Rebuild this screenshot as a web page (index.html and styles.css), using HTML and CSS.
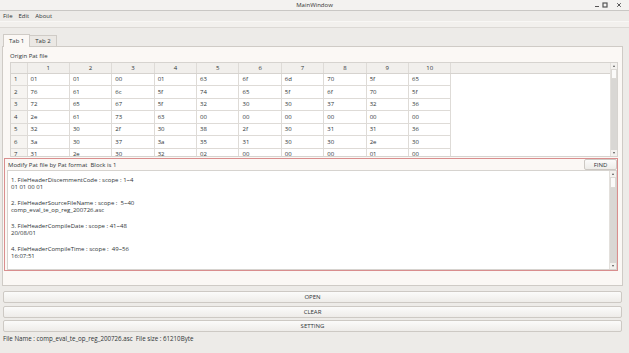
FILE: index.html
```html
<!DOCTYPE html>
<html>
<head>
<meta charset="utf-8">
<title>MainWindow</title>
<link rel="stylesheet" href="styles.css">
</head>
<body>
<div class="window">
  <div class="titlebar">
    <span></span>
    <span class="title">MainWindow</span>
    <span class="controls">
      <svg width="6" height="6" viewBox="0 0 6 6"><rect x="1" y="4" width="4" height="1" fill="#555"/></svg>
      <svg width="6" height="6" viewBox="0 0 6 6"><rect x="1" y="1" width="4" height="4" fill="none" stroke="#555" stroke-width="1.2"/></svg>
      <svg width="6" height="6" viewBox="0 0 6 6"><path d="M1.2 1.2 L4.8 4.8 M4.8 1.2 L1.2 4.8" stroke="#555" stroke-width="1"/></svg>
    </span>
  </div>
  <div class="menubar">
    <span>File</span><span>Edit</span><span>About</span>
  </div>
  <div class="toolbar"></div>
  <div class="tabbar">
    <div class="tab active">Tab 1</div>
    <div class="tab">Tab 2</div>
  </div>
  <div class="pane">
    <div class="label">Origin Pat file</div>
    <div class="tablebox">
      <div class="tablearea">
        <table class="grid">
          <thead>
            <tr><th class="corner"></th><th>1</th><th>2</th><th>3</th><th>4</th><th>5</th><th>6</th><th>7</th><th>8</th><th>9</th><th>10</th><th class="filler"></th></tr>
          </thead>
          <tbody>
            <tr><th>1</th><td>01</td><td>01</td><td>00</td><td>01</td><td>63</td><td>6f</td><td>6d</td><td>70</td><td>5f</td><td>65</td><td class="filler"></td></tr>
            <tr><th>2</th><td>76</td><td>61</td><td>6c</td><td>5f</td><td>74</td><td>65</td><td>5f</td><td>6f</td><td>70</td><td>5f</td><td class="filler"></td></tr>
            <tr><th>3</th><td>72</td><td>65</td><td>67</td><td>5f</td><td>32</td><td>30</td><td>30</td><td>37</td><td>32</td><td>36</td><td class="filler"></td></tr>
            <tr><th>4</th><td>2e</td><td>61</td><td>73</td><td>63</td><td>00</td><td>00</td><td>00</td><td>00</td><td>00</td><td>00</td><td class="filler"></td></tr>
            <tr><th>5</th><td>32</td><td>30</td><td>2f</td><td>30</td><td>38</td><td>2f</td><td>30</td><td>31</td><td>31</td><td>36</td><td class="filler"></td></tr>
            <tr><th>6</th><td>3a</td><td>30</td><td>37</td><td>3a</td><td>35</td><td>31</td><td>30</td><td>30</td><td>2e</td><td>30</td><td class="filler"></td></tr>
            <tr><th>7</th><td>31</td><td>2e</td><td>30</td><td>32</td><td>02</td><td>00</td><td>00</td><td>00</td><td>01</td><td>00</td><td class="filler"></td></tr>
          </tbody>
        </table>
      </div>
      <div class="vscroll">
        <div class="arrow up"></div>
        <div class="handle short"></div>
        <div class="trough"></div>
        <div class="arrow down"></div>
      </div>
    </div>
    <div class="group">
      <div class="grouphead">
        <span class="grouplabel">Modify Pat file by Pat format&nbsp; Block is 1</span>
        <button class="btn find">FIND</button>
      </div>
      <div class="editbox">
        <div class="edittext">
          <p>1. FileHeaderDiscemmentCode : scope : 1~4<br>01 01 00 01</p>
          <p>2. FileHeaderSourceFileName : scope :&nbsp; 5~40<br>comp_eval_te_op_reg_200726.asc</p>
          <p>3. FileHeaderCompileDate : scope : 41~48<br>20/08/01</p>
          <p>4. FileHeaderCompileTime : scope :&nbsp; 49~56<br>16:07:51</p>
        </div>
        <div class="vscroll">
          <div class="arrow up"></div>
          <div class="handle"></div>
          <div class="trough"></div>
          <div class="arrow down"></div>
        </div>
      </div>
    </div>
  </div>
  <div class="buttons">
    <button class="btn wide">OPEN</button>
    <button class="btn wide">CLEAR</button>
    <button class="btn wide">SETTING</button>
  </div>
  <div class="status">File Name : comp_eval_te_op_reg_200726.asc&nbsp; File size : 61210Byte</div>
</div>
</body>
</html>
```

FILE: styles.css
```css
* { box-sizing: border-box; }
html, body {
  margin: 0;
  padding: 0;
}
body {
  width: 629px;
  height: 353px;
  overflow: hidden;
  background: #edebe8;
  font-family: "Open Sans", "DejaVu Sans", sans-serif;
  font-size: 6px;
  color: #2e3436;
}
.window {
  display: flex;
  flex-direction: column;
  height: 353px;
}
.titlebar {
  height: 11px;
  display: grid;
  grid-template-columns: 1fr auto 1fr;
  align-items: center;
  background: #f3f2f0;
  border-bottom: 1px solid #c9c7c4;
}
.title { font-size: 6px; color: #333; }
.controls {
  display: flex;
  justify-content: flex-end;
  gap: 2px;
  padding-right: 7px;
}
.controls svg { display: block; }
.controls svg:last-child { margin-left: 6px; }
.menubar {
  height: 10px;
  display: flex;
  align-items: center;
  gap: 6px;
  padding-left: 3px;
  background: #edebe8;
}
.toolbar {
  height: 7px;
  background: #f2f0ed;
  border-top: 1px solid #f8f7f5;
  border-bottom: 1px solid #dcd9d5;
}
.tabbar {
  display: flex;
  align-items: flex-end;
  height: 18px;
  padding-left: 3px;
}
.tab {
  height: 11px;
  padding: 0 5px;
  display: flex;
  align-items: center;
  border: 1px solid #cfcbc6;
  border-bottom: none;
  background: #ebe8e4;
  margin-bottom: 0;
}
.tab.active {
  height: 13px;
  background: #fbf8f5;
  margin-bottom: -1px;
  position: relative;
  z-index: 1;
}
.tab + .tab { border-left: none; }
.pane {
  margin: 0 6px 0 2px;
  height: 240px;
  background: #fbf8f5;
  border: 1px solid #cfcbc6;
  padding: 0 4px 0 1px;
  display: flex;
  flex-direction: column;
}
.label {
  height: 15px;
  display: flex;
  align-items: center;
  padding-left: 6px;
  padding-top: 2px;
}
.tablebox {
  margin-left: 6px;
  height: 95px;
  display: flex;
  border: 1px solid #d6d3cf;
  background: #fff;
  overflow: hidden;
}
.tablearea {
  flex: 1;
  overflow: hidden;
}
.grid {
  border-collapse: collapse;
  table-layout: fixed;
  width: 100%;
  font-size: 6px;
}
.grid th, .grid td {
  padding: 0 0 0 3px;
  height: 12.5px;
  border-right: 1px solid #dedbd7;
  border-bottom: 1px solid #dedbd7;
  white-space: nowrap;
  font-weight: normal;
  text-align: left;
}
.grid thead th {
  height: 10px;
  text-align: center;
  padding: 0;
  background: #f1efec;
  border-bottom: 1px solid #d6d3cf;
  width: 42.4px;
}
.grid thead th.corner { width: 16px; }
.grid thead th.filler { width: auto; border-right: none; }
.grid tbody th {
  background: #f6f4f1;
}
.grid td.filler { border: none; }
.vscroll {
  width: 7px;
  display: flex;
  flex-direction: column;
  background: #f1efec;
  border-left: 1px solid #e3e0dc;
}
.vscroll .arrow {
  height: 6px;
  position: relative;
  background: #f3f1ee;
}
.vscroll .arrow::after {
  content: "";
  position: absolute;
  left: 1.5px;
  top: 2px;
  border-left: 1.5px solid transparent;
  border-right: 1.5px solid transparent;
}
.vscroll .arrow.up::after { border-bottom: 2px solid #555; }
.vscroll .arrow.down::after { border-top: 2px solid #555; }
.vscroll .handle {
  height: 11px;
  background: #fbfaf9;
  border: 1px solid #dcd9d5;
}
.vscroll .handle.short { height: 10px; }
.vscroll .trough {
  flex: 1;
  background: #d9d7d4;
}
.group {
  margin-top: 1px;
  height: 113px;
  border: 1px solid #d98e8e;
  display: flex;
  flex-direction: column;
}
.grouphead {
  height: 14px;
  display: flex;
  align-items: center;
  justify-content: space-between;
  padding: 0 0 0 3px;
}
.btn {
  font-family: inherit;
  font-size: 6px;
  color: #2e3436;
  background: linear-gradient(#fbfbfa, #eeece9);
  border: 1px solid #cdc9c4;
  border-radius: 2px;
  padding: 0;
  margin: 0;
}
.find {
  width: 33px;
  height: 11px;
}
.editbox {
  flex: 1;
  margin: 0 0 1px 2px;
  display: flex;
  background: #fff;
  border: 1px solid #d6d3cf;
}
.edittext {
  flex: 1;
  padding: 6px 0 0 3px;
  font-size: 6px;
  line-height: 7px;
}
.edittext p {
  margin: 0 0 9px 0;
}
.buttons {
  display: flex;
  flex-direction: column;
  gap: 2.5px;
  margin: 5px 7px 0 3px;
}
.btn.wide {
  height: 12px;
  width: 100%;
}
.status {
  margin-top: 1px;
  padding-left: 3px;
  height: 10px;
  display: flex;
  align-items: center;
  font-size: 6.2px;
}
```
